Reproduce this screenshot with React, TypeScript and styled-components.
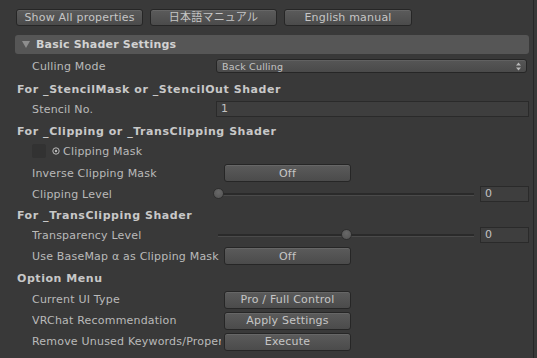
import styled, { createGlobalStyle } from "styled-components";

const GlobalStyle = createGlobalStyle`
  html, body {
    margin: 0;
    padding: 0;
    background: #393939;
  }
  * {
    box-sizing: border-box;
  }
`;

const FONT = `"DejaVu Sans", "Noto Sans CJK JP", sans-serif`;

const Inspector = styled.div`
  width: 534px;
  height: 358px;
  background: #393939;
  border-right: 1px solid #262626;
  font-family: ${FONT};
  font-size: 11px;
  letter-spacing: 0.2px;
  color: #bababa;
  overflow: hidden;
`;

const Toolbar = styled.div`
  display: flex;
  gap: 7px;
  padding: 9px 0 0 16px;
`;

const Button = styled.button<{ $w?: number }>`
  width: ${(p) => p.$w ?? 127}px;
  height: 17px;
  padding: 0;
  border: 1px solid #262626;
  border-radius: 3px;
  background: linear-gradient(#5b5b5b, #4b4b4b);
  box-shadow: inset 0 1px 0 rgba(255, 255, 255, 0.08);
  color: #c6c6c6;
  font-family: ${FONT};
  font-size: 11px;
  letter-spacing: 0.2px;
  line-height: 15px;
  text-align: center;
  white-space: nowrap;
`;

const Foldout = styled.div`
  display: flex;
  align-items: center;
  gap: 6px;
  margin: 9px 4px 0 15px;
  height: 19px;
  padding-left: 7px;
  border-radius: 3px;
  background: #565656;
  color: #d2d2d2;
  font-weight: bold;
  letter-spacing: 0.2px;
`;

const Rows = styled.div`
  display: flex;
  flex-direction: column;
  padding-top: 2px;
`;

const Row = styled.div<{ $h?: number; $mt?: number }>`
  display: flex;
  align-items: center;
  height: ${(p) => p.$h ?? 20}px;
  margin-top: ${(p) => p.$mt ?? 0}px;
  padding-left: 32px;
  padding-right: 4px;
`;

const Header = styled.div<{ $mt?: number }>`
  display: flex;
  align-items: center;
  height: 20px;
  margin-top: ${(p) => p.$mt ?? 0}px;
  padding-left: 17px;
  font-weight: bold;
  letter-spacing: 0.55px;
  color: #c8c8c8;
`;

const Label = styled.div<{ $w?: number }>`
  flex: none;
  width: ${(p) => p.$w ?? 184}px;
  overflow: hidden;
  white-space: nowrap;
`;

const Dropdown = styled.div`
  flex: 1;
  display: flex;
  align-items: center;
  justify-content: space-between;
  height: 14px;
  margin-right: 2px;
  padding: 0 5px 0 5px;
  border: 1px solid #262626;
  border-radius: 3px;
  background: linear-gradient(#565656, #4a4a4a);
  box-shadow: inset 0 1px 0 rgba(255, 255, 255, 0.07);
  color: #c4c4c4;
  font-size: 9.5px;
`;

const Field = styled.div<{ $w?: number }>`
  flex: ${(p) => (p.$w ? "none" : "1")};
  width: ${(p) => (p.$w ? `${p.$w}px` : "auto")};
  height: 16px;
  padding-left: 4px;
  border: 1px solid #2a2a2a;
  background: #3e3e3e;
  color: #c2c2c2;
  font-size: 11px;
  line-height: 14px;
`;

const Slider = styled.div`
  flex: 1;
  display: flex;
  align-items: center;
  gap: 6px;
`;

const Track = styled.div`
  position: relative;
  flex: 1;
  height: 3px;
  margin-left: 2px;
  border-top: 2px solid #2a2a2a;
  border-bottom: 1px solid #4a4a4a;
`;

const Knob = styled.div`
  position: absolute;
  top: -7px;
  width: 11px;
  height: 11px;
  margin-left: -5px;
  border-radius: 50%;
  border: 1px solid #2e2e2e;
  background: radial-gradient(circle at 50% 35%, #686868, #525252);
`;

const Check = styled.div`
  flex: none;
  width: 14px;
  height: 14px;
  border: 1px solid #323232;
  border-radius: 2px;
  background: #323232;
`;

const CheckLabel = styled.div`
  display: flex;
  align-items: center;
  gap: 3px;
  margin-left: 6px;
`;

const ControlButton = styled(Button)`
  margin-left: 3px;
  height: 18px;
`;

function SliderRow({ label, pos }: { label: string; pos: number }) {
  return (
    <Row>
      <Label>{label}</Label>
      <Slider>
        <Track>
          <Knob style={{ left: `${pos}%` }} />
        </Track>
        <Field $w={49}>0</Field>
      </Slider>
    </Row>
  );
}

function ButtonRow({ label, text, h = 21, mt = 0 }: { label: string; text: string; h?: number; mt?: number }) {
  return (
    <Row $h={h} $mt={mt}>
      <Label $w={189}>{label}</Label>
      <ControlButton>{text}</ControlButton>
    </Row>
  );
}

export default function App() {
  return (
    <>
      <GlobalStyle />
      <Inspector>
        <Toolbar>
          <Button>Show All properties</Button>
          <Button>日本語マニュアル</Button>
          <Button $w={128}>English manual</Button>
        </Toolbar>

        <Foldout>
          <svg width="8" height="7" viewBox="0 0 8 7">
            <path d="M0 0 H8 L4 7 Z" fill="#8e8e8e" />
          </svg>
          Basic Shader Settings
        </Foldout>

        <Rows>
          <Row>
            <Label>Culling Mode</Label>
            <Dropdown>
              <span>Back Culling</span>
              <svg width="5" height="9" viewBox="0 0 5 9">
                <path d="M0 3.5 L2.5 0.5 L5 3.5 Z M0 5.5 L2.5 8.5 L5 5.5 Z" fill="#b8b8b8" />
              </svg>
            </Dropdown>
          </Row>

          <Header $mt={3}>For _StencilMask or _StencilOut Shader</Header>
          <Row>
            <Label>Stencil No.</Label>
            <Field>1</Field>
          </Row>

          <Header $mt={2}>For _Clipping or _TransClipping Shader</Header>
          <Row>
            <Check />
            <CheckLabel>
              <svg width="8" height="8" viewBox="0 0 8 8">
                <circle cx="4" cy="4" r="3.2" fill="none" stroke="#bababa" strokeWidth="1" />
                <circle cx="4" cy="4" r="1.2" fill="#bababa" />
              </svg>
              Clipping Mask
            </CheckLabel>
          </Row>
          <ButtonRow label="Inverse Clipping Mask" text="Off" h={22} mt={1} />
          <SliderRow label="Clipping Level" pos={0} />

          <Header $mt={1}>For _TransClipping Shader</Header>
          <SliderRow label="Transparency Level" pos={50} />
          <ButtonRow label="Use BaseMap α as Clipping Mask" text="Off" h={22} />

          <Header $mt={1}>Option Menu</Header>
          <ButtonRow label="Current UI Type" text="Pro / Full Control" mt={1} />
          <ButtonRow label="VRChat Recommendation" text="Apply Settings" />
          <ButtonRow label="Remove Unused Keywords/Properties" text="Execute" />
        </Rows>
      </Inspector>
    </>
  );
}
